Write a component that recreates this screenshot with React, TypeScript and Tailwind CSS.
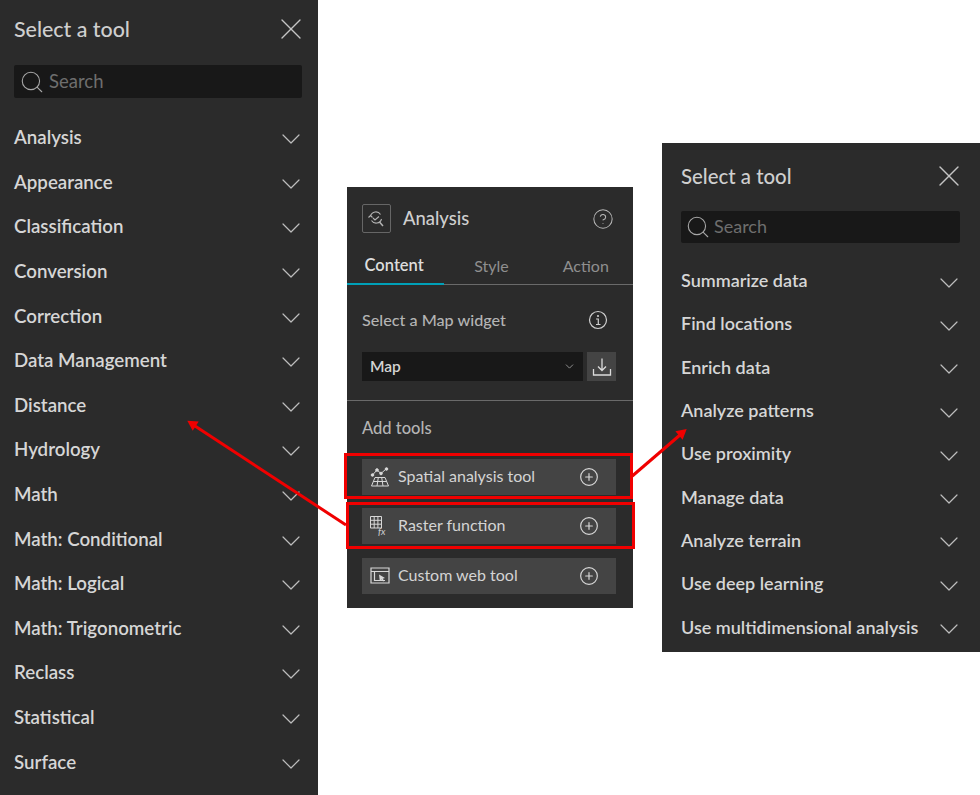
import type { ReactNode } from "react";
import { ChevronDown, CircleHelp, CirclePlus, Search, X } from "lucide-react";

const leftTools = [
  "Analysis",
  "Appearance",
  "Classification",
  "Conversion",
  "Correction",
  "Data Management",
  "Distance",
  "Hydrology",
  "Math",
  "Math: Conditional",
  "Math: Logical",
  "Math: Trigonometric",
  "Reclass",
  "Statistical",
  "Surface",
];

const rightTools = [
  "Summarize data",
  "Find locations",
  "Enrich data",
  "Analyze patterns",
  "Use proximity",
  "Manage data",
  "Analyze terrain",
  "Use deep learning",
  "Use multidimensional analysis",
];

function SpatialIcon() {
  return (
    <svg width="20" height="20" viewBox="0 0 20 20" fill="none" stroke="#d8d8d8" strokeWidth="1">
      <path d="M2.500 8l4.500-5 4 3.500 5-4.500" />
      <circle cx="2.500" cy="8" r="1.300" fill="#d8d8d8" />
      <circle cx="7" cy="3" r="1.300" fill="#d8d8d8" />
      <circle cx="11" cy="6.500" r="1.300" fill="#d8d8d8" />
      <circle cx="16.500" cy="2" r="1.300" fill="#d8d8d8" />
      <path d="M5 10.500h10l3.500 8.500h-17zM3.400 14.500h13.200M8.300 10.500l-1.300 8.500M11.700 10.500l1.300 8.500" />
    </svg>
  );
}

function RasterIcon() {
  return (
    <svg width="20" height="20" viewBox="0 0 20 20" fill="none" stroke="#d8d8d8" strokeWidth="1">
      <path d="M0.500 0.500h11v11.500h-11zM0.500 4.300h11M0.500 8.200h11M4.200 0.500v11.500M7.900 0.500v11.500" />
      <text x="8" y="18.500" fill="#d0d0d0" stroke="none" fontSize="9.500" fontStyle="italic" fontFamily="Lato, sans-serif">
        fx
      </text>
    </svg>
  );
}

function WebToolIcon() {
  return (
    <svg width="20" height="17" viewBox="0 0 20 17" fill="none" stroke="#d8d8d8" strokeWidth="1.200">
      <path d="M1 1h18v15H1zM1 4.500h18M4.500 4.500V13.500h10.500" />
      <path d="M9 7.500l6 3.500-2.300.8 1.600 2-1.200.8-1.500-2-1.800 1.300z" fill="#d8d8d8" stroke="none" />
    </svg>
  );
}

function AnalysisIcon() {
  return (
    <svg width="19" height="19" viewBox="0 0 19 19" fill="none" stroke="#b4b4b4" strokeWidth="1.100">
      <path d="M3.500 7a5.500 5.500 0 0 1 10-1.500M14.500 10a5.500 5.500 0 0 1-10 1.500" />
      <path d="M1.500 8.500l2-2 2 2M6 9l2 2 4-3.500" />
      <path d="M12.500 13l3.500 4" strokeWidth="1.500" />
    </svg>
  );
}

function DownloadTrayIcon() {
  return (
    <svg width="20" height="20" viewBox="0 0 20 20" fill="none" stroke="#dcdcdc" strokeWidth="1.300">
      <path d="M10 1.500v12M6 9.500l4 4 4-4M1.500 12v6h17v-6" />
    </svg>
  );
}

function InfoIcon() {
  return (
    <svg width="22" height="22" viewBox="0 0 22 22" fill="none" stroke="#cfcfcf" strokeWidth="1.200">
      <circle cx="11" cy="11" r="8.500" />
      <circle cx="11" cy="7" r="1.100" fill="#cfcfcf" stroke="none" />
      <path d="M9 10h2.300v5.500M9 15.500h4.500" />
    </svg>
  );
}

function ToolRow({ label, icon, highlight }: { label: string; icon: ReactNode; highlight?: string }) {
  return (
    <div className="relative h-[36px] flex items-center bg-[#444444] pl-[8px] pr-[17px] text-[#d4d4d4] text-[16px]">
      <span className="w-[28px] flex items-center">{icon}</span>
      <span className="flex-1 pb-[2px]">{label}</span>
      <CirclePlus size={20} strokeWidth={1.400} className="text-[#d8d8d8]" />
      {highlight && <div className={highlight} />}
    </div>
  );
}

function ToolPanel({
  tools,
  panelClass,
  headClass,
  titleClass,
  searchClass,
  searchTextClass,
  listClass,
  rowClass,
}: {
  tools: string[];
  panelClass: string;
  headClass: string;
  titleClass: string;
  searchClass: string;
  searchTextClass: string;
  listClass: string;
  rowClass: string;
}) {
  return (
    <div className={`absolute w-[318px] bg-[#2b2b2b] ${panelClass}`}>
      <div className={`flex items-center justify-between ${headClass}`}>
        <span className={`text-[#cfcfcf] font-medium ${titleClass}`}>Select a tool</span>
        <X size={36} strokeWidth={0.9} className="text-[#c4c4c4] -mr-[7px]" />
      </div>
      <div className={`flex items-center bg-[#181818] rounded-[2px] ${searchClass}`}>
        <Search size={26} strokeWidth={1} className="text-[#a8a8a8]" />
        <span className={`text-[#6e6e6e] ${searchTextClass}`}>Search</span>
      </div>
      <div className={listClass}>
        {tools.map((tool) => (
          <div key={tool} className={`flex items-center justify-between font-semibold text-[#d6d6d6] ${rowClass}`}>
            <span>{tool}</span>
            <ChevronDown size={32} strokeWidth={0.9} className="text-[#bdbdbd] -mr-[5px] mt-[4px]" />
          </div>
        ))}
      </div>
    </div>
  );
}

export default function App() {
  return (
    <div className="relative w-[980px] h-[795px] bg-white overflow-hidden font-['Lato',sans-serif]">
      <ToolPanel
        tools={leftTools}
        panelClass="left-0 top-0 h-[795px]"
        headClass="pl-[14px] pr-[16px] h-[58px] mb-[7px]"
        titleClass="text-[21.400px]"
        searchClass="ml-[14px] mr-[16px] h-[33px] pl-[5px] gap-[4px]"
        searchTextClass="text-[18.500px]"
        listClass="pl-[14px] pr-[16px] pt-[17px]"
        rowClass="h-[44.600px] text-[18.700px]"
      />
      <ToolPanel
        tools={rightTools}
        panelClass="left-[662px] top-[143px] h-[509px]"
        headClass="pl-[19px] pr-[20px] h-[66px] mb-[2px]"
        titleClass="text-[20.400px]"
        searchClass="ml-[19px] mr-[20px] h-[32px] pl-[4px] pb-[1px] gap-[3px]"
        searchTextClass="text-[18px]"
        listClass="pl-[19px] pr-[20px] pt-[16px]"
        rowClass="h-[43.300px] text-[18px]"
      />

      <div className="absolute left-[347px] top-[187px] w-[286px] h-[421px] bg-[#2b2b2b] text-[16px]">
        <div className="flex items-center h-[29px] mt-[17px] ml-[15px] mr-[19px]">
          <span className="w-[29px] h-[29px] border border-[#666666] rounded-[2px] flex items-center justify-center">
            <AnalysisIcon />
          </span>
          <span className="ml-[12px] flex-1 text-[18.400px] font-medium text-[#cfcfcf]">Analysis</span>
          <CircleHelp size={22} strokeWidth={1.100} className="text-[#b8b8b8]" />
        </div>
        <div className="flex mt-[14px] h-[38px] border-b border-[#6a6a6a]">
          <div className="flex-1 flex items-center justify-center -mb-px border-b-2 border-[#00a0b8] font-semibold text-[16.500px] text-[#dddddd] pr-[3px]">
            Content
          </div>
          <div className="flex-1 flex items-center justify-center text-[#8f8f8f]">Style</div>
          <div className="flex-1 flex items-center justify-center text-[#8f8f8f]">Action</div>
        </div>
        <div className="flex items-center justify-between h-[20px] mt-[25px] ml-[15px] mr-[24px] text-[16.200px] text-[#b4b4b4] font-medium">
          <span>Select a Map widget</span>
          <InfoIcon />
        </div>
        <div className="flex h-[29px] mt-[22px] ml-[15px] mr-[17px] gap-[4px]">
          <div className="flex-1 flex items-center justify-between bg-[#181818] pl-[8px] pr-[7px] font-semibold text-[15.500px] text-[#d4d4d4]">
            <span>Map</span>
            <ChevronDown size={13} strokeWidth={1.500} className="text-[#a8a8a8]" />
          </div>
          <div className="w-[29px] bg-[#444444] flex items-center justify-center">
            <DownloadTrayIcon />
          </div>
        </div>
        <div className="h-px bg-[#6a6a6a] mt-[19px]" />
        <div className="ml-[15px] mt-[18px] h-[18px] flex items-center text-[16.500px] text-[#b4b4b4] font-medium">Add tools</div>
        <div className="mt-[22px] ml-[15px] mr-[17px] flex flex-col gap-[13.300px]">
          <ToolRow
            label="Spatial analysis tool"
            icon={<SpatialIcon />}
            highlight="absolute -left-[18px] -right-[17px] -top-[6px] -bottom-[4px] border-[3.500px] border-[#f00000]"
          />
          <ToolRow
            label="Raster function"
            icon={<RasterIcon />}
            highlight="absolute -left-[16px] -right-[19px] -top-[6px] -bottom-[5px] border-[3.500px] border-[#f00000]"
          />
          <ToolRow label="Custom web tool" icon={<WebToolIcon />} />
        </div>
      </div>

      <svg className="absolute left-0 top-0 pointer-events-none" width="980" height="795" viewBox="0 0 980 795" fill="none">
        <path d="M346 525L195 426" stroke="#f00000" strokeWidth="3" />
        <path d="M187.300 420.700L192.700 430.800L198.700 421.600z" fill="#f00000" />
        <path d="M632.300 476L680 435" stroke="#f00000" strokeWidth="3" />
        <path d="M686.700 429L682.600 439.700L675.400 431.300z" fill="#f00000" />
      </svg>
    </div>
  );
}
